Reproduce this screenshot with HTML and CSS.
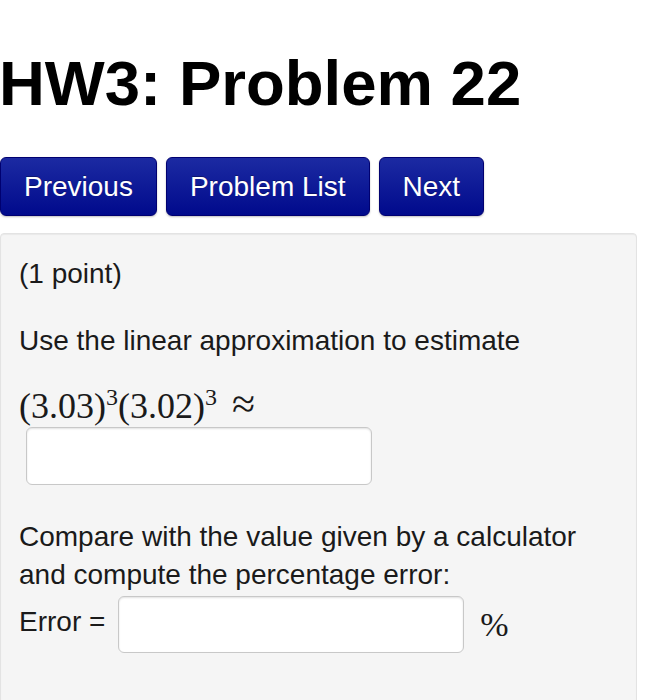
FILE: index.html
```html
<!DOCTYPE html>
<html lang="en">
<head>
    <meta charset="UTF-8">
    <meta name="viewport" content="width=device-width, initial-scale=1.0">
    <title>HW3: Problem 22</title>
    <link rel="stylesheet" href="styles.css">
</head>
<body>
    <h1 class="problem-title">HW3: Problem 22</h1>

    <div class="nav-buttons">
        <button class="nav-btn">Previous</button>
        <button class="nav-btn">Problem List</button>
        <button class="nav-btn">Next</button>
    </div>

    <div class="problem-body">
        <p>(1 point)</p>
        <p>Use the linear approximation to estimate</p>
        <div class="math-line">
            <span class="math">(3.03)<sup>3</sup>(3.02)<sup>3</sup> <span class="approx">&#8776;</span></span>
        </div>
        <input type="text" class="answer answer-first">

        <p class="compare">Compare with the value given by a calculator and compute the percentage error:</p>
        <div class="error-row">
            <span>Error =</span>
            <input type="text" class="answer">
            <span class="math percent">%</span>
        </div>
    </div>
</body>
</html>
```

FILE: styles.css
```css
body, html {
    margin: 0;
    padding: 0;
    background-color: #fff;
    font-family: 'Liberation Sans', Arial, sans-serif;
}

.problem-title {
    font-size: 63.5px;
    font-weight: bold;
    line-height: 71px;
    color: #000;
    margin: 48px 0 38px -1px;
}

.nav-buttons {
    display: flex;
    gap: 9px;
    height: 59px;
}

.nav-btn {
    font-family: 'Liberation Sans', Arial, sans-serif;
    font-size: 28px;
    color: #fff;
    padding: 0 23px;
    border: 1px solid #000070;
    border-radius: 6px;
    background: linear-gradient(#1c2aa2, #000a8c);
    box-shadow: 0 1px 2px rgba(0,0,0,0.25);
    text-shadow: 0 -1px 0 rgba(0,0,0,0.3);
    cursor: pointer;
}

.problem-body {
    margin-top: 17px;
    width: 637px;
    min-height: 480px;
    box-sizing: border-box;
    padding: 21px 18px;
    background-color: #f5f5f5;
    border: 1px solid #e3e3e3;
    border-radius: 4px;
    box-shadow: inset 0 1px 1px rgba(0,0,0,0.05);
    font-size: 28px;
    line-height: 38px;
    color: #1a1a1a;
}

.problem-body p {
    margin: 0 0 29px 0;
}

.math-line {
    margin-top: -4px;
    height: 41px;
}

.math {
    font-family: 'Liberation Serif', 'Times New Roman', serif;
    font-size: 36px;
}

.math sup {
    font-size: 24px;
    line-height: 0;
}

.approx {
    margin-left: 6px;
    font-size: 42px;
}

.answer {
    display: block;
    width: 346px;
    height: 58px;
    box-sizing: border-box;
    border: 1px solid #c8c8c8;
    border-radius: 6px;
    background-color: #fff;
    box-shadow: inset 0 1px 2px rgba(0,0,0,0.12);
    font-size: 24px;
}

.answer-first {
    margin: 1px 0 0 7px;
}

.compare {
    margin-top: 33px !important;
    margin-bottom: 2px !important;
}

.error-row {
    display: flex;
    align-items: center;
    height: 57px;
}

.error-row span:first-child {
    margin-top: -6px;
}

.error-row .answer {
    height: 57px;
    margin: 0 16px 0 13px;
}

.percent {
    font-size: 34px;
}
```
